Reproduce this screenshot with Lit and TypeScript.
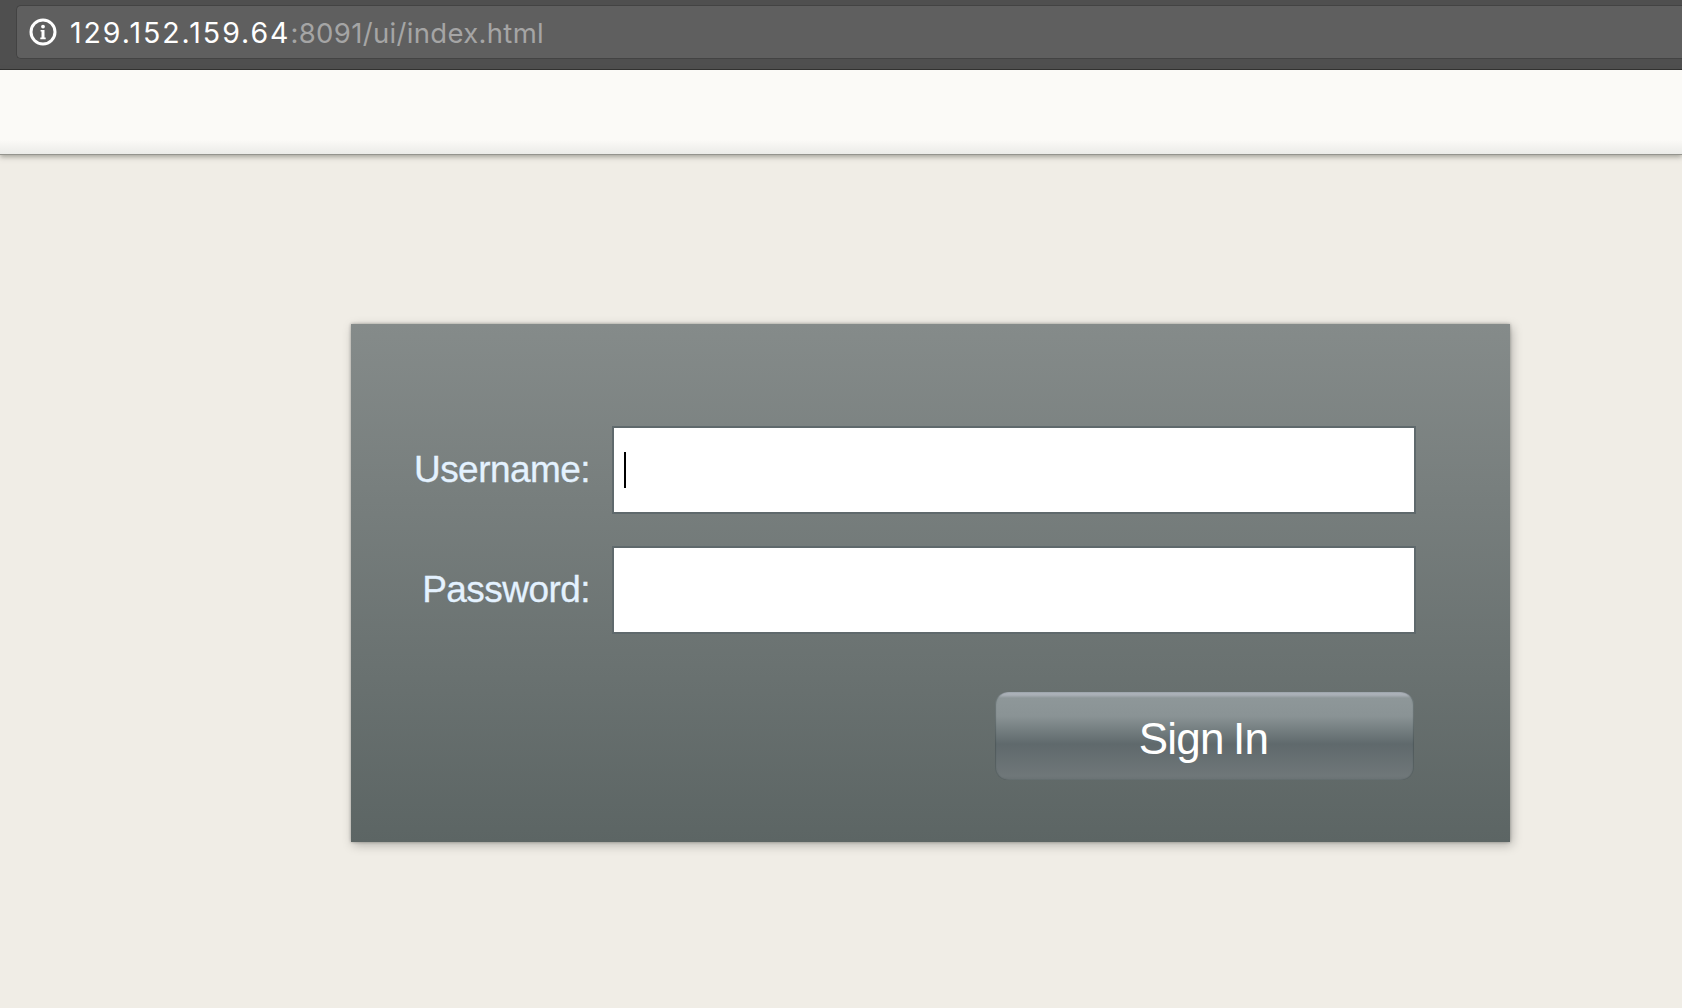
import { LitElement, html, css } from "lit";
import { customElement } from "lit/decorators.js";

@customElement("app-root")
export class AppRoot extends LitElement {
  static styles = css`
    :host {
      display: block;
      min-height: 100vh;
      background: #f0ede6;
      font-family: "Liberation Sans", Arial, sans-serif;
      overflow: hidden;
    }
    .toolbar {
      box-sizing: border-box;
      height: 70px;
      padding: 5px 0 11px 16px;
      background: #4f4f4f;
      border-bottom: 1px solid #2e2e2e;
    }
    .address {
      box-sizing: border-box;
      height: 53.5px;
      display: flex;
      align-items: center;
      gap: 13px;
      padding-left: 12px;
      background: #5f5f5f;
      border: 1px solid #434343;
      border-right: none;
      border-radius: 5px 0 0 5px;
      font-family: Inter, sans-serif;
      font-size: 27.5px;
    }
    .address svg {
      flex: none;
    }
    .url {
      padding-top: 2px;
    }
    .host-name {
      color: #ffffff;
      font-size: 28.5px;
      letter-spacing: 1.95px;
    }
    .rest {
      color: #a5a5a5;
      letter-spacing: 0.33px;
    }
    .band {
      height: 84px;
      background: linear-gradient(to bottom, #fbfaf7 0, #fbfaf7 70px, #ebebe8 84px);
      border-bottom: 1px solid #94948e;
      box-shadow: 0 2px 5px rgba(90, 90, 80, 0.5);
    }
    .card {
      box-sizing: border-box;
      width: 1159px;
      height: 518px;
      margin: 169px 0 0 351px;
      padding: 102px 94px 0 0;
      background: linear-gradient(to bottom, #858b8a 0%, #5c6564 100%);
      box-shadow: 2px 3px 10px rgba(0, 0, 0, 0.26), 0 0 3px rgba(0, 0, 0, 0.3);
    }
    .form {
      display: grid;
      grid-template-columns: 239px 1fr;
      column-gap: 22px;
      row-gap: 32px;
      align-items: center;
    }
    label {
      justify-self: end;
      font-size: 37px;
      letter-spacing: -0.55px;
      color: #e4f2ff;
      -webkit-text-stroke: 0.3px #e4f2ff;
    }
    .input {
      box-sizing: border-box;
      height: 88px;
      display: flex;
      align-items: center;
      padding-left: 10px;
      background: #ffffff;
      border: 2px solid #5f696c;
    }
    .caret {
      width: 2px;
      height: 36px;
      background: #000000;
    }
    .actions {
      display: flex;
      justify-content: flex-end;
      margin-top: 58px;
      padding-right: 2px;
    }
    button {
      box-sizing: border-box;
      width: 419px;
      height: 88px;
      padding: 5px 2px 0 0;
      border: none;
      border-radius: 13px;
      background: linear-gradient(
        to bottom,
        #acb2b9 0,
        #a9afb6 3px,
        #8e9799 6px,
        #8a9395 24px,
        #5f696c 52px,
        #6f7779 84px,
        #6a7274 88px
      );
      box-shadow: inset 1px 0 1px rgba(60, 70, 72, 0.45), inset -1px 0 1px rgba(60, 70, 72, 0.45);
      font-family: "Liberation Sans", Arial, sans-serif;
      font-size: 44px;
      letter-spacing: -0.8px;
      word-spacing: -2px;
      color: #ffffff;
    }
  `;

  render() {
    return html`
      <div class="toolbar">
        <div class="address">
          <svg width="28" height="28" viewBox="0 0 28 28" fill="none">
            <circle cx="14" cy="14" r="12" stroke="#ffffff" stroke-width="3"></circle>
            <circle cx="14" cy="8.6" r="1.9" fill="#ffffff"></circle>
            <path d="M11.6 12h3.9v7.6h1.2v1.6h-5.4v-1.6h1.2v-6h-.9z" fill="#ffffff"></path>
          </svg>
          <span class="url"><span class="host-name">129.152.159.64</span><span class="rest">:8091/ui/index.html</span></span>
        </div>
      </div>
      <div class="band"></div>
      <div class="card">
        <div class="form">
          <label>Username:</label>
          <div class="input"><span class="caret"></span></div>
          <label>Password:</label>
          <div class="input"></div>
        </div>
        <div class="actions"><button>Sign In</button></div>
      </div>
    `;
  }
}
